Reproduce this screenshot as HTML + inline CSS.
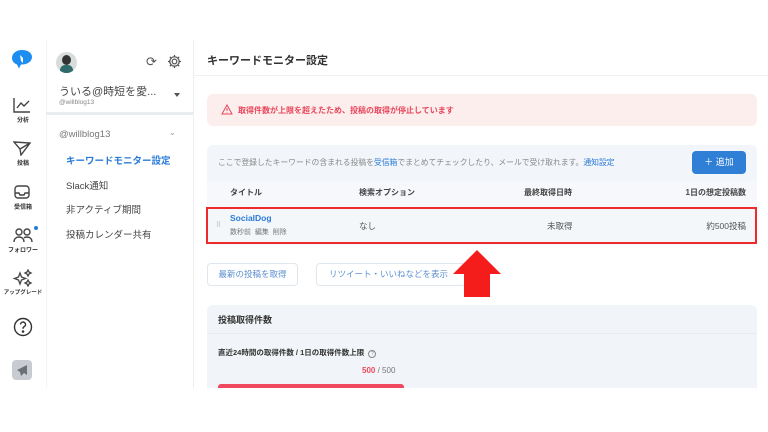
<!DOCTYPE html>
<html><head><meta charset="utf-8"><style>
*{margin:0;padding:0;box-sizing:border-box}
body{width:768px;height:432px;background:#fff;font-family:"Liberation Sans","Noto Sans CJK JP",sans-serif;position:relative;overflow:hidden;color:#333}
.a{position:absolute}
.lbl{position:absolute;font-size:6px;font-weight:bold;color:#333;width:46px;text-align:center;left:0}
.ic{position:absolute;left:13px}
.side{font-size:9.5px;color:#444}
</style></head><body>
<!-- icon column -->
<div class="a" style="left:46px;top:40px;width:1px;height:348px;background:#f3f3f3"></div>
<svg class="a" style="left:11px;top:49px" width="22" height="20" viewBox="0 0 22 20"><path d="M11 1C5 1 1 4.5 1 9c0 3 2 5.5 5 6.5l2 4 2-4c.3 0 .7 0 1 0 6 0 10-3.5 10-7.5S17 1 11 1z" fill="#1d8ef0"/><path d="M9 6l3 3v5l-2-2z" fill="#fff"/></svg>
<svg class="ic" style="top:97px" width="18" height="16" viewBox="0 0 18 16" fill="none" stroke="#444" stroke-width="1.4"><path d="M1 1v14h16M4 11l4-5 3 3 5-5"/></svg>
<div class="lbl" style="top:115px">分析</div>
<svg class="ic" style="top:140px" width="18" height="16" viewBox="0 0 18 16" fill="none" stroke="#444" stroke-width="1.4"><path d="M1 2l16 1-9 12-1-6z M7 9l10-6"/></svg>
<div class="lbl" style="top:158px">投稿</div>
<svg class="ic" style="top:184px" width="18" height="16" viewBox="0 0 18 16" fill="none" stroke="#444" stroke-width="1.4"><rect x="2" y="2" width="14" height="12" rx="3"/><path d="M2 9h4l1 2h4l1-2h4"/></svg>
<div class="lbl" style="top:202px">受信箱</div>
<svg class="ic" style="top:227px" width="20" height="16" viewBox="0 0 20 16" fill="none" stroke="#444" stroke-width="1.4"><circle cx="6" cy="5" r="3"/><circle cx="14" cy="5" r="3"/><path d="M1 15c0-4 3-5 5-5s5 1 5 5M11 11c1-1 2-1 3-1 2 0 5 1 5 5"/></svg>
<div class="a" style="left:34px;top:226px;width:4px;height:4px;border-radius:50%;background:#2a7bd8"></div>
<div class="lbl" style="top:245px">フォロワー</div>
<svg class="ic" style="top:269px" width="20" height="18" viewBox="0 0 20 18" fill="none" stroke="#444" stroke-width="1.3"><path d="M7 4l1.5 4 4 1.5-4 1.5L7 15l-1.5-4-4-1.5 4-1.5z M15 1l1 2 2 1-2 1-1 2-1-2-2-1 2-1z M15 11l1 2 2 1-2 1-1 2-1-2-2-1 2-1z"/></svg>
<div class="lbl" style="top:288px;font-size:5.5px">アップグレード</div>
<svg class="a" style="left:13px;top:317px" width="20" height="20" viewBox="0 0 20 20" fill="none" stroke="#333" stroke-width="1.4"><circle cx="10" cy="10" r="8.5"/><path d="M7.5 7.5a2.5 2.5 0 1 1 3.5 2.3c-1 .4-1 1-1 2"/><circle cx="10" cy="14.5" r=".6" fill="#333"/></svg>
<div class="a" style="left:12px;top:360px;width:20px;height:20px;border-radius:4px;background:#c8ccd2"></div>
<svg class="a" style="left:15px;top:364px" width="14" height="12" viewBox="0 0 14 12"><path d="M2 6l10-5v10l-3-2-3 3-1-4z" fill="#6b7078"/></svg>

<!-- sidebar -->
<div class="a" style="left:193px;top:40px;width:1px;height:348px;background:#eee"></div>
<div class="a" style="left:56px;top:52px;width:21px;height:21px;border-radius:50%;background:#d8dcdc;overflow:hidden"><div style="margin:3px 0 0 6px;width:9px;height:10px;border-radius:50%;background:#333"></div><div style="margin:0 0 0 4px;width:13px;height:8px;border-radius:5px 5px 0 0;background:#2e6b6a"></div></div>
<div class="a" style="left:146px;top:54px;font-size:13px;color:#555">⟳</div>
<svg class="a" style="left:167px;top:54px" width="15" height="15" viewBox="0 0 16 16" fill="none" stroke="#555" stroke-width="1.3"><circle cx="8" cy="8" r="2.5"/><path d="M8 1v2M8 13v2M1 8h2M13 8h2M3 3l1.4 1.4M11.6 11.6L13 13M3 13l1.4-1.4M11.6 4.4L13 3"/><circle cx="8" cy="8" r="5"/></svg>
<div class="a" style="left:59px;top:83px;font-size:11px;color:#444">ういる@時短を愛...</div>
<div class="a" style="left:174px;top:93px;border:3px solid transparent;border-top:4px solid #555"></div>
<div class="a" style="left:59px;top:99px;font-size:6.5px;color:#888">@willblog13</div>
<div class="a" style="left:46px;top:112px;width:147px;height:3px;background:#e8ebef"></div>
<div class="a side" style="left:59px;top:129px;color:#777">@willblog13</div>
<div class="a" style="left:169px;top:128px;font-size:8px;color:#999">⌄</div>
<div class="a side" style="left:66px;top:153px;color:#2a7bd8;font-weight:bold">キーワードモニター設定</div>
<div class="a side" style="left:66px;top:178px">Slack通知</div>
<div class="a side" style="left:66px;top:202px">非アクティブ期間</div>
<div class="a side" style="left:66px;top:227px">投稿カレンダー共有</div>

<!-- main -->
<div class="a" style="left:207px;top:52px;font-size:11px;font-weight:bold;color:#333">キーワードモニター設定</div>
<div class="a" style="left:194px;top:75px;width:574px;height:1px;background:#f0f0f0"></div>
<div class="a" style="left:207px;top:94px;width:550px;height:32px;border-radius:6px;background:#fdeeee"></div>
<svg class="a" style="left:221px;top:104px" width="12" height="11" viewBox="0 0 12 11" fill="none" stroke="#e8455a" stroke-width="1"><path d="M6 1L11 10H1z M6 4v3M6 8.2v.6"/></svg>
<div class="a" style="left:238px;top:105px;font-size:8px;font-weight:bold;color:#e8455a">取得件数が上限を超えたため、投稿の取得が停止しています</div>

<div class="a" style="left:207px;top:145px;width:550px;height:100px;border-radius:6px;background:#f2f5f9"></div>
<div class="a" style="left:207px;top:181px;width:550px;height:26px;background:#f6f8fb"></div>
<div class="a" style="left:218px;top:157px;font-size:7.8px;color:#888">ここで登録したキーワードの含まれる投稿を<span style="color:#2a7bd8">受信箱</span>でまとめてチェックしたり、メールで受け取れます。<span style="color:#2a7bd8">通知設定</span></div>
<div class="a" style="left:692px;top:151px;width:54px;height:23px;border-radius:4px;background:#2f7fd6;color:#fff;font-size:9px;text-align:center;line-height:23px">＋ 追加</div>
<div class="a" style="left:230px;top:187px;font-size:8px;font-weight:bold;color:#444">タイトル</div>
<div class="a" style="left:359px;top:187px;font-size:8px;font-weight:bold;color:#444">検索オプション</div>
<div class="a" style="left:524px;top:187px;font-size:8px;font-weight:bold;color:#444">最終取得日時</div>
<div class="a" style="left:640px;top:187px;width:106px;text-align:right;font-size:8px;font-weight:bold;color:#444">1日の想定投稿数</div>
<div class="a" style="left:206px;top:207px;width:551px;height:37px;border:2px solid #ee2a2a;background:#f4f7fa"></div>
<div class="a" style="left:216px;top:221px;font-size:7px;color:#aaa">⠿</div>
<div class="a" style="left:230px;top:213px;font-size:8.5px;font-weight:bold;color:#2a7bd8">SocialDog</div>
<div class="a" style="left:230px;top:227px;font-size:7px;color:#777">数秒前 &nbsp;編集 &nbsp;削除</div>
<div class="a" style="left:359px;top:220px;font-size:8.5px;color:#555">なし</div>
<div class="a" style="left:547px;top:220px;font-size:8.5px;color:#555">未取得</div>
<div class="a" style="left:640px;top:220px;width:106px;text-align:right;font-size:8.5px;color:#555">約500投稿</div>

<div class="a" style="left:207px;top:263px;width:91px;height:23px;border:1px solid #dfe6ee;border-radius:4px;font-size:8.5px;color:#5b8fd0;text-align:center;line-height:21px">最新の投稿を取得</div>
<div class="a" style="left:316px;top:263px;width:150px;height:23px;border:1px solid #dfe6ee;border-radius:4px;font-size:8.5px;color:#5b8fd0;line-height:21px;padding-left:12px">リツイート・いいねなどを表示</div>
<svg class="a" style="left:452px;top:249px" width="50" height="48" viewBox="0 0 50 48"><path d="M25 1L49 25H38V48H12V25H1z" fill="#f51c1c"/></svg>

<div class="a" style="left:207px;top:305px;width:550px;height:83px;border-radius:6px 6px 0 0;background:#f1f4f8"></div>
<div class="a" style="left:207px;top:333px;width:550px;height:1px;background:#e8ecf1"></div>
<div class="a" style="left:218px;top:313px;font-size:9px;font-weight:bold;color:#333">投稿取得件数</div>
<div class="a" style="left:218px;top:347px;font-size:7.5px;font-weight:bold;color:#333">直近24時間の取得件数 / 1日の取得件数上限 &nbsp;<span style="display:inline-block;width:8px;height:8px;border:1px solid #888;border-radius:50%;font-size:5px;line-height:6px;text-align:center;font-weight:normal;color:#888">?</span></div>
<div class="a" style="left:362px;top:366px;font-size:8px;color:#555"><b style="color:#f0485e">500</b> <span style="color:#777">/ 500</span></div>
<div class="a" style="left:218px;top:384px;width:186px;height:4px;border-radius:3px 3px 0 0;background:#f0485e"></div>
</body></html>
